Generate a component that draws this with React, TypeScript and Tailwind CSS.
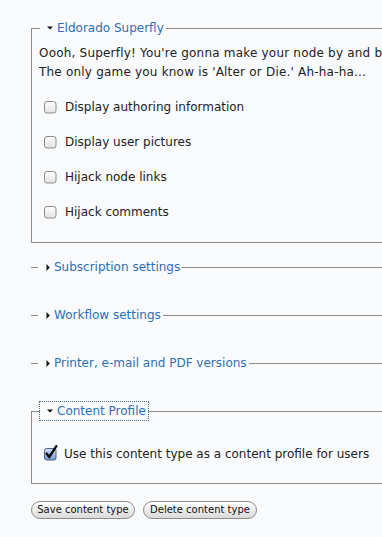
import React from 'react'

const LINK = 'text-[#2b70b6]'

function ArrowDown() {
  return (
    <svg width="6" height="4" viewBox="0 0 6 4" className="block shrink-0">
      <path d="M0 0.5 L6 0.5 L3 3.5 Z" fill="#111" />
    </svg>
  )
}

function ArrowRight() {
  return (
    <svg width="4" height="7" viewBox="0 0 4 7" className="block shrink-0">
      <path d="M0.5 0 L3.8 3.5 L0.5 7 Z" fill="#111" />
    </svg>
  )
}

function Box({ checked }: { checked?: boolean }) {
  if (checked) {
    return (
      <svg width="14" height="16" viewBox="0 0 14 16" className="block shrink-0 -mt-[3px]">
        <defs>
          <linearGradient id="chk" x1="0" y1="0" x2="0" y2="1">
            <stop offset="0" stopColor="#d4e3f7" />
            <stop offset="1" stopColor="#6f9bd8" />
          </linearGradient>
        </defs>
        <rect x="0.5" y="3.5" width="11.5" height="11.5" rx="2" fill="url(#chk)" stroke="#4f6688" />
        <path d="M2.6 8.6 L5.2 12 L12.4 1.2" fill="none" stroke="#0d0d0d" strokeWidth="2.4" strokeLinecap="round" strokeLinejoin="round" />
      </svg>
    )
  }
  return (
    <svg width="13" height="13" viewBox="0 0 13 13" className="block shrink-0">
      <defs>
        <linearGradient id="unchk" x1="0" y1="0" x2="0" y2="1">
          <stop offset="0" stopColor="#ffffff" />
          <stop offset="1" stopColor="#e2e2e2" />
        </linearGradient>
      </defs>
      <rect x="0.5" y="0.5" width="11.5" height="11.5" rx="2.5" fill="url(#unchk)" stroke="#8a8a8a" />
    </svg>
  )
}

function CheckRow({ label, checked }: { label: string; checked?: boolean }) {
  return (
    <label className="flex h-[18px] items-center whitespace-nowrap pl-[5px]">
      <Box checked={checked} />
      <span className={checked ? 'ml-[6px]' : 'ml-[8px]'}>{label}</span>
    </label>
  )
}

function Collapsed({ title }: { title: string }) {
  return (
    <fieldset className="border-t border-[#8c8c8c] px-[7px]">
      <legend className="pr-[2px] pl-[8px]">
        <span className={`flex h-[18px] items-center leading-[18px] ${LINK}`}>
          <ArrowRight />
          <span className="ml-[4px] whitespace-nowrap">{title}</span>
        </span>
      </legend>
    </fieldset>
  )
}

export default function App() {
  return (
    <div className="h-[537px] w-[382px] overflow-hidden bg-[#f9fafb] font-['DejaVu_Sans',Verdana,sans-serif] text-[12px] text-[#222]">
      <div className="w-[440px] pt-[19px] pl-[31px]">
        {/* Eldorado Superfly */}
        <fieldset className="border border-[#8c8c8c] px-[7px] pt-[7px] pb-[21px]">
          <legend className="ml-px pr-[2px] pl-[7px]">
            <span className={`flex h-[18px] items-center leading-[18px] ${LINK}`}>
              <ArrowDown />
              <span className="ml-[4px] whitespace-nowrap">Eldorado Superfly</span>
            </span>
          </legend>
          <p className="whitespace-nowrap leading-[19px] tracking-[0.2px]">
            Oooh, Superfly! You're gonna make your node by and by.
            <br />
            The only game you know is 'Alter or Die.' Ah-ha-ha...
          </p>
          <div className="mt-[16px] flex flex-col gap-[17px]">
            <CheckRow label="Display authoring information" />
            <CheckRow label="Display user pictures" />
            <CheckRow label="Hijack node links" />
            <CheckRow label="Hijack comments" />
          </div>
        </fieldset>

        <div className="mt-[15px] flex flex-col gap-[30px]">
          <Collapsed title="Subscription settings" />
          <Collapsed title="Workflow settings" />
          <Collapsed title="Printer, e-mail and PDF versions" />

          {/* Content Profile */}
          <fieldset className="border border-[#8c8c8c] px-[7px] pt-[25px] pb-[20px]">
            <legend className="ml-px pr-[2px] pl-[7px] outline-1 outline-dotted outline-[#4b6f96]">
              <span className={`flex h-[18px] items-center leading-[18px] ${LINK}`}>
                <ArrowDown />
                <span className="ml-[4px] whitespace-nowrap">Content Profile</span>
              </span>
            </legend>
            <CheckRow label="Use this content type as a content profile for users" checked />
          </fieldset>
        </div>

        <div className="mt-[17px] flex gap-[8px]">
          <button className="h-[18px] w-[104px] rounded-full border border-[#8e8e8e] bg-linear-to-b from-white to-[#dadada] text-[10px] leading-none text-[#111]">
            Save content type
          </button>
          <button className="h-[18px] w-[114px] rounded-full border border-[#8e8e8e] bg-linear-to-b from-white to-[#dadada] text-[10px] leading-none text-[#111]">
            Delete content type
          </button>
        </div>
      </div>
    </div>
  )
}
